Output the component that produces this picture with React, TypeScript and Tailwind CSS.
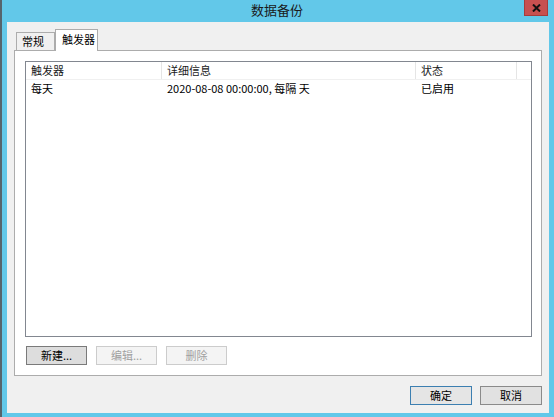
export default function App() {
  const font = { fontFamily: '"Noto Sans CJK SC", "Noto Sans", sans-serif' };
  return (
    <div
      className="w-[554px] h-[417px] bg-[#62c8e9] flex overflow-hidden text-[11px] text-black"
      style={font}
    >
      {/* 左侧窗口背后的暗边 */}
      <div className="w-[2px] h-full bg-[#56646c]" />

      <div className="flex-1 flex flex-col">
        {/* 标题栏 */}
        <div className="h-[22px] relative flex items-center justify-center pb-[3px]">
          <span className="text-[13px] leading-none text-[#1a1a1a] -ml-[2px]">数据备份</span>
          <div className="absolute right-[6px] top-0 w-[24px] h-[16px] bg-[#c75050] border border-[#a63c3c] border-t-0 flex items-center justify-center">
            <svg width="9" height="8" viewBox="0 0 9 8">
              <path d="M1 0.5 L8 7.5 M8 0.5 L1 7.5" stroke="#111" strokeWidth="2" />
            </svg>
          </div>
        </div>

        {/* 客户区 */}
        <div className="ml-[5px] mr-[5px] mb-[4px] flex-1 bg-[#f0f0f0] flex flex-col pt-[7px] px-[7px]">
          {/* 选项卡 */}
          <div className="h-[21px] flex items-end relative z-10">
            <div className="ml-[2px] w-[39px] h-[18px] border border-b-0 border-[#acacac] bg-[#f0f0f0] pl-[5px] leading-[17px] whitespace-nowrap">
              常规
            </div>
            <div className="w-[43px] h-[22px] -mb-[1px] border border-b-0 border-[#acacac] bg-white pl-[6px] leading-[19px] whitespace-nowrap">
              触发器
            </div>
          </div>

          {/* 选项卡面板 */}
          <div className="w-[528px] h-[326px] border border-[#acacac] bg-white pl-[10px] pt-[10px]">
            <div className="w-[507px] h-[276px] border border-[#828790] bg-white flex flex-col">
              <div className="h-[18px] flex border-b border-[#f0f0f0] text-[#1a1a1a]">
                <div className="w-[136px] border-r border-[#e5e5e5] pl-[5px] leading-[16px]">触发器</div>
                <div className="w-[254px] border-r border-[#e5e5e5] pl-[5px] leading-[16px]">详细信息</div>
                <div className="w-[101px] border-r border-[#e5e5e5] pl-[5px] leading-[16px]">状态</div>
                <div className="flex-1" />
              </div>
              <div className="h-[17px] flex leading-[17px]">
                <div className="w-[136px] pl-[5px]">每天</div>
                <div className="w-[254px] pl-[5px] whitespace-nowrap">2020-08-08 00:00:00, 每隔 天</div>
                <div className="w-[101px] pl-[5px]">已启用</div>
              </div>
            </div>

            <div className="flex gap-[9px] mt-[9px] ml-[1px]">
              <button className="w-[61px] h-[19px] border border-[#7a7a7a] bg-[#dddddd] text-[11px] leading-none">
                新建...
              </button>
              <button className="w-[61px] h-[19px] border border-[#cccccc] bg-[#f4f4f4] text-[11px] leading-none text-[#a0a0a0]">
                编辑...
              </button>
              <button className="w-[61px] h-[19px] border border-[#cccccc] bg-[#f4f4f4] text-[11px] leading-none text-[#a0a0a0]">
                删除
              </button>
            </div>
          </div>

          {/* 底部按钮 */}
          <div className="flex justify-end gap-[8px] mt-[10px] w-[528px]">
            <button className="w-[62px] h-[19px] border border-[#3c7fb1] bg-[#e5e5e5] text-[11px] leading-none">
              确定
            </button>
            <button className="w-[62px] h-[19px] border border-[#8a8a8a] bg-[#e1e1e1] text-[11px] leading-none">
              取消
            </button>
          </div>
        </div>
      </div>
    </div>
  );
}
